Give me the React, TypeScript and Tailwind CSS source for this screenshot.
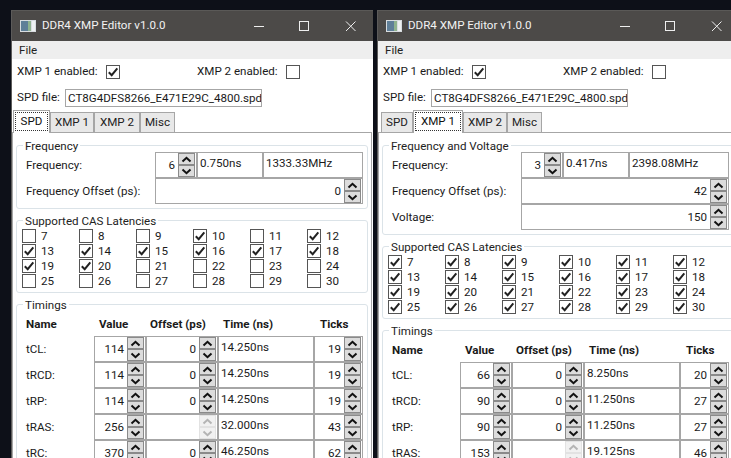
import React from "react";

function Arrow({ up, disabled }: { up: boolean; disabled?: boolean }) {
  return (
    <svg width="11" height="7" viewBox="0 0 11 7" className="block">
      <path
        d={up ? "M1.5 5.5 L5.5 1.8 L9.5 5.5" : "M1.5 1.5 L5.5 5.2 L9.5 1.5"}
        fill="none"
        stroke={disabled ? "#b4b4b4" : "#111"}
        strokeWidth="2"
      />
    </svg>
  );
}

function Spinner({ disabled }: { disabled?: boolean }) {
  const btn = disabled
    ? "h-[12px] w-[17px] flex items-center justify-center bg-[#f1f1f1] border border-[#e2e2e2]"
    : "h-[12px] w-[17px] flex items-center justify-center bg-[#dcdcdc] border border-[#8a8a8a]";
  return (
    <div className="flex flex-col shrink-0 mr-px">
      <div className={btn}><Arrow up disabled={disabled} /></div>
      <div className={btn}><Arrow up={false} disabled={disabled} /></div>
    </div>
  );
}

function Num({ value, disabled }: { value: string; disabled?: boolean }) {
  return (
    <div className="h-[26px] border border-[#a6a6a6] bg-white flex items-center justify-end min-w-0">
      <span className="pr-[3px] pt-[2px]">{value}</span>
      <Spinner disabled={disabled} />
    </div>
  );
}

function TextCell({ value }: { value: string }) {
  return (
    <div className="h-[26px] border border-[#a6a6a6] bg-white pl-[2px] pt-[2px] leading-[16px] min-w-0">{value}</div>
  );
}

function Check({ on }: { on: boolean }) {
  return (
    <div className="w-[14px] h-[14px] border border-[#555] bg-white shrink-0 flex items-center justify-center">
      {on && (
        <svg width="12" height="12" viewBox="0 0 12 12">
          <path d="M1.8 6.2 L4.7 9.2 L10.3 2.4" fill="none" stroke="#222" strokeWidth="2" />
        </svg>
      )}
    </div>
  );
}

function Group({ title, children, pb }: { title: string; children: React.ReactNode; pb: string }) {
  return (
    <fieldset className={`border border-[#dbe3e8] rounded-[3px] mb-[3px] ${pb}`}>
      <legend className="ml-[6px] px-[2px] pt-px h-[16px] leading-[16px] text-[#222]">{title}</legend>
      {children}
    </fieldset>
  );
}

type Timing = [string, string, string, string, string];

function AppWindow({
  tab,
  freqTitle,
  cycles,
  ns,
  mhz,
  offset,
  voltage,
  checked,
  timings,
}: {
  tab: number;
  freqTitle: string;
  cycles: string;
  ns: string;
  mhz: string;
  offset: string;
  voltage?: string;
  checked: number[];
  timings: Timing[];
}) {
  const tabs = ["SPD", "XMP 1", "XMP 2", "Misc"];
  const widths = tab === 0 ? ["w-[37px]", "w-[44px]", "w-[46px]", "w-[35px]"] : ["w-[32px]", "w-[50px]", "w-[44px]", "w-[35px]"];
  const cas = Array.from({ length: 24 }, (_, i) => i + 7);
  return (
    <div className="w-[362px] shrink-0 h-[470px] border-l border-[#5c5b5a] flex flex-col bg-white">
      <div className="h-[31px] shrink-0 bg-[#4c4a48] border-t border-[#5a5957] flex items-center text-[#f2f2f2] relative">
        <svg width="16" height="12" viewBox="0 0 16 12" className="ml-[8px] mr-[5px]">
          <rect width="16" height="12" fill="#d8dde0" />
          <rect x="1" y="1" width="7" height="10" fill="#5f7f98" />
          <rect x="8" y="1" width="3" height="10" fill="#8fb38f" />
          <rect x="12" y="1" width="3" height="10" fill="#eef1f2" />
        </svg>
        <span className="ml-[1px]">DDR4 XMP Editor v1.0.0</span>
        <svg width="110" height="12" viewBox="0 0 110 12" className="absolute left-[241px] top-[10px]">
          <path d="M1 5.5 H11" stroke="#eee" strokeWidth="1" />
          <rect x="46.5" y="0.5" width="9" height="9" fill="none" stroke="#eee" />
          <path d="M93 0.5 L102.5 10 M102.5 0.5 L93 10" stroke="#eee" strokeWidth="1" />
        </svg>
      </div>
      <div className="h-[18px] shrink-0 bg-[#eeeeee] flex items-center pl-[7px] pt-px text-[#222]">File</div>
      <div className="h-[26px] shrink-0 flex items-center pl-[5px] text-[#1a1a1a]">
        <span className="w-[89px]">XMP 1 enabled:</span>
        <Check on />
        <span className="ml-[77px] w-[89px]">XMP 2 enabled:</span>
        <Check on={false} />
      </div>
      <div className="h-[26px] shrink-0 flex items-center pl-[5px] text-[#1a1a1a]">
        <span className="w-[48px]">SPD file:</span>
        <div className="w-[197px] h-[18px] border border-[#a6a6a6] pl-[2px] leading-[16px] whitespace-nowrap overflow-hidden">
          CT8G4DFS8266_E471E29C_4800.spd
        </div>
      </div>
      <div className={`h-[22px] shrink-0 flex items-end relative z-10 -mb-px ${tab === 0 ? "pl-[1px]" : "pl-[3px]"}`}>
        {tabs.map((t, i) =>
          i === tab ? (
            <div key={t} className={`${widths[i]} h-[23px] border border-b-0 border-[#a6a6a6] bg-white p-[1px] text-[#111]`}>
              <div className="h-[19px] border border-dotted border-[#333] flex items-center justify-center">{t}</div>
            </div>
          ) : (
            <div key={t} className={`${widths[i]} h-[21px] border border-[#a6a6a6] bg-[#e8e8e8] flex items-center justify-center pt-px text-[#222]`}>
              {t}
            </div>
          )
        )}
      </div>
      <div className="flex-1 border border-[#a6a6a6] mr-px px-[3px] pt-[4px] text-[#1a1a1a]">
        <Group title={freqTitle} pb="pb-[4px]">
          <div className="-mt-px pl-[9px] pr-[4px] grid grid-cols-[129px_42px_66px_100px]">
            <div className="flex items-center pt-[2px]">Frequency:</div>
            <Num value={cycles} />
            <TextCell value={ns} />
            <TextCell value={mhz} />
            <div className="flex items-center pt-[2px]">Frequency Offset (ps):</div>
            <div className="col-span-3"><Num value={offset} /></div>
            {voltage && (
              <>
                <div className="flex items-center pt-[2px]">Voltage:</div>
                <div className="col-span-3"><Num value={voltage} /></div>
              </>
            )}
          </div>
        </Group>
        <Group title="Supported CAS Latencies" pb="pb-[4px]">
          <div className="grid grid-cols-[57px_57px_57px_57px_57px_57px] pl-[5px] pt-px -mt-[1px]">
            {cas.map((n) => (
              <div key={n} className="h-[15px] leading-[15px] flex items-center">
                <Check on={checked.includes(n)} />
                <span className="ml-[5px] pt-px">{n}</span>
              </div>
            ))}
          </div>
        </Group>
        <Group title="Timings" pb="pb-[4px]">
          <div className="pl-[9px] pr-[4px]">
            <div className="grid grid-cols-[68px_52px_72px_96px_49px] h-[24px] items-center font-bold pt-px">
              <div>Name</div>
              <div className="pl-[5px]">Value</div>
              <div className="pl-[4px] whitespace-nowrap">Offset (ps)</div>
              <div className="pl-[5px] whitespace-nowrap">Time (ns)</div>
              <div className="pl-[6px]">Ticks</div>
            </div>
            {timings.map((r) => (
              <div key={r[0]} className="grid grid-cols-[68px_52px_72px_96px_49px]">
                <div className="flex items-center pt-[2px]">{r[0]}</div>
                <Num value={r[1]} />
                <Num value={r[2]} disabled={r[2] === ""} />
                <TextCell value={r[3]} />
                <Num value={r[4]} />
              </div>
            ))}
          </div>
        </Group>
      </div>
    </div>
  );
}

export default function App() {
  const allCas = Array.from({ length: 24 }, (_, i) => i + 7);
  return (
    <div
      className="w-[731px] h-[458px] overflow-hidden bg-[#0d1018] flex gap-[4px] pl-[11px] pt-[10px] text-[11.6px]"
      style={{ fontFamily: 'Roboto, "Noto Sans", sans-serif' }}
    >
      <AppWindow
        tab={0}
        freqTitle="Frequency"
        cycles="6"
        ns="0.750ns"
        mhz="1333.33MHz"
        offset="0"
        checked={[10, 12, 13, 14, 15, 16, 17, 18, 19, 20]}
        timings={[
          ["tCL:", "114", "0", "14.250ns", "19"],
          ["tRCD:", "114", "0", "14.250ns", "19"],
          ["tRP:", "114", "0", "14.250ns", "19"],
          ["tRAS:", "256", "", "32.000ns", "43"],
          ["tRC:", "370", "0", "46.250ns", "62"],
        ]}
      />
      <AppWindow
        tab={1}
        freqTitle="Frequency and Voltage"
        cycles="3"
        ns="0.417ns"
        mhz="2398.08MHz"
        offset="42"
        voltage="150"
        checked={allCas}
        timings={[
          ["tCL:", "66", "0", "8.250ns", "20"],
          ["tRCD:", "90", "0", "11.250ns", "27"],
          ["tRP:", "90", "0", "11.250ns", "27"],
          ["tRAS:", "153", "", "19.125ns", "46"],
        ]}
      />
    </div>
  );
}
